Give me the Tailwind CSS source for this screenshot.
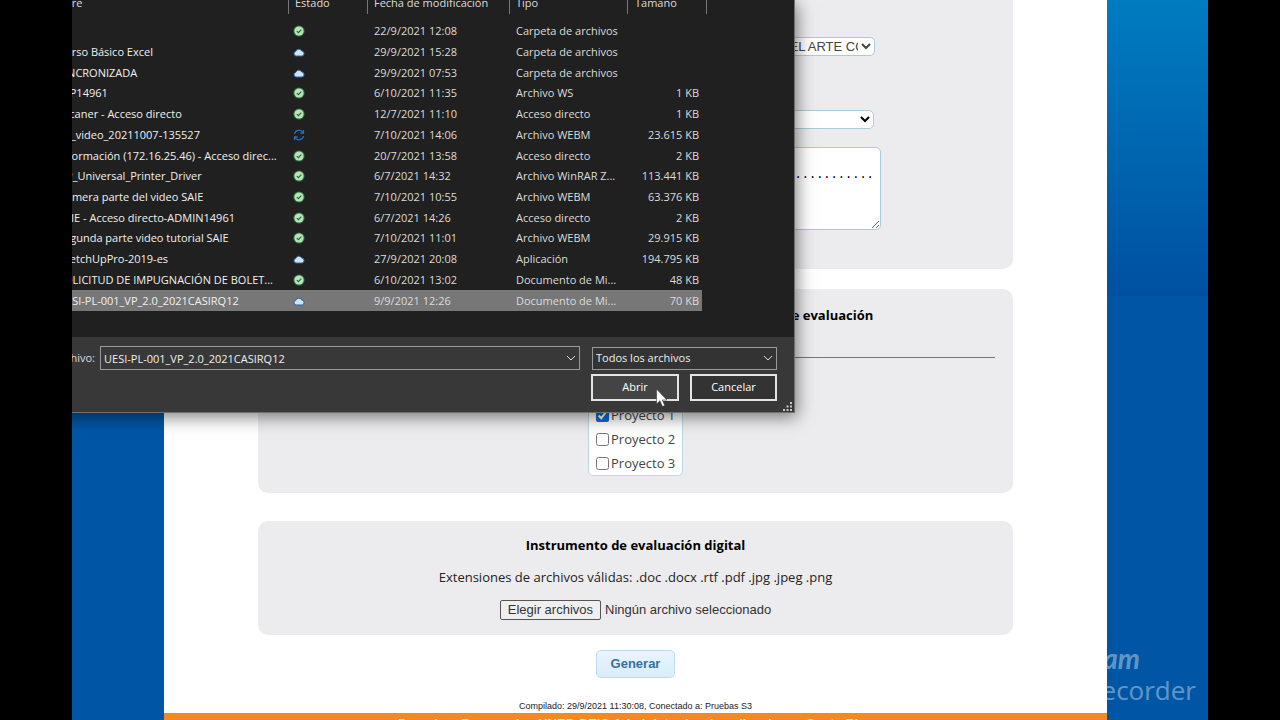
<!DOCTYPE html>
<html lang="es">
<head>
    <meta charset="UTF-8">
    <meta name="viewport" content="width=device-width, initial-scale=1.0">
    <title>Instrumento de evaluación</title>
    <script src="https://cdn.jsdelivr.net/npm/@tailwindcss/browser@4"></script>
</head>
<body class="bg-black px-[72px] font-['Open_Sans',sans-serif]">
    <!-- Icons used by the file list -->
    <svg class="hidden">
        <symbol id="ok" viewBox="0 0 12 12">
            <circle cx="6" cy="6" r="5.6" fill="#2f7a3c"></circle>
            <circle cx="6" cy="6" r="4.6" fill="#b9e2bc"></circle>
            <path d="M3.8 6.1l1.6 1.6 2.9-3.1" fill="none" stroke="#2b6b35" stroke-width="1.2"></path>
        </symbol>
        <symbol id="cloud" viewBox="0 0 12 12">
            <path d="M3 10a2.3 2.3 0 01-.3-4.5A3.2 3.2 0 018.6 4.9A2.6 2.6 0 019.2 10z" fill="#cfe4f7" stroke="#2468ac" stroke-width="1"></path>
        </symbol>
        <symbol id="sync" viewBox="0 0 12 12">
            <path d="M1.5 5A4.5 4.5 0 0110 3.8M10.5 1v3.2H7.3M10.5 7A4.5 4.5 0 012 8.2M1.5 11V7.8h3.2" fill="none" stroke="#2474bd" stroke-width="1.2"></path>
        </symbol>
    </svg>

    <div class="relative h-screen overflow-hidden bg-[#0056a4]">
        <div class="absolute inset-x-0 top-0 h-[296px] bg-linear-to-b from-[#007cc0] to-[#0050a0]"></div>

        <!-- Page -->
        <main class="relative ml-[92px] mr-[101px] flex h-full flex-col bg-white text-center">
            <section class="mx-[94px] flex h-[269px] shrink-0 flex-col items-center rounded-b-[10px] bg-[#ececee] pt-[37px]">
                <select aria-label="Asignatura" class="h-[19px] w-[478px] rounded-[5px] border border-[#a9cbdc] bg-white font-['Liberation_Sans',sans-serif] text-[13px] text-[#444]">
                    <option>412 - INTRODUCCIÓN A LA HISTORIA Y LA TEORÍA GENERAL DEL ARTE CONTEMPORÁNEO</option>
                </select>
                <select aria-label="Tipo de instrumento" class="mt-[54px] h-[19px] w-[476px] rounded-[5px] border border-[#a9cbdc] bg-white text-[13px]">
                    <option></option>
                </select>
                <textarea aria-label="Observaciones" class="mt-[18px] h-[83px] w-[490px] shrink-0 rounded-[5px] border border-[#a9cbdc] bg-white py-[6px] pr-0 pl-[7px] font-['Liberation_Mono',monospace] text-xs leading-[14px] text-black">

...................................................................</textarea>
            </section>

            <section class="mx-[94px] mt-5 flex h-[204px] shrink-0 flex-col items-center rounded-[10px] bg-[#ececee] pt-4">
                <h2 class="text-[13px] font-bold leading-5">Elijan los instrumentos que corresponden a esta propuesta de evaluación</h2>
                <hr class="mt-8 w-[719px] max-w-full border-[#777]">
                <div class="mt-auto mb-[17px] flex w-[95px] flex-col rounded-[5px] border border-[#b9d8e4] bg-white pt-1 pl-[7px] text-left text-[13px] leading-6 text-[#444]">
                    <label class="flex items-center gap-[2px]"><input type="checkbox" checked class="size-[13px] accent-[#0a6cdc]">Proyecto 1</label>
                    <label class="flex items-center gap-[2px]"><input type="checkbox" class="size-[13px]">Proyecto 2</label>
                    <label class="flex items-center gap-[2px]"><input type="checkbox" class="size-[13px]">Proyecto 3</label>
                </div>
            </section>

            <section class="mx-[94px] mt-7 flex h-[114px] shrink-0 flex-col items-center rounded-[10px] bg-[#ececee] pt-[14px]">
                <h2 class="text-[13px] font-bold leading-5">Instrumento de evaluación digital</h2>
                <p class="mt-3 text-[13px] leading-5 text-[#222]">Extensiones de archivos válidas: .doc .docx .rtf .pdf .jpg .jpeg .png</p>
                <div class="mt-[13px] flex items-center gap-1 font-['Liberation_Sans',sans-serif] text-[13px] text-[#333]">
                    <input id="files" type="file" multiple class="sr-only">
                    <label for="files" class="rounded-[2px] border border-[#555] bg-[#efefef] px-[7px] leading-[18px]">Elegir archivos</label>
                    <span>Ningún archivo seleccionado</span>
                </div>
            </section>

            <button class="mx-auto mt-[15px] h-7 w-[79px] shrink-0 rounded-[5px] border border-[#bcdbea] bg-linear-to-b from-[#e8f5fe] to-[#d8edfa] font-['Liberation_Sans',sans-serif] text-[13px] font-bold text-[#38709e]">Generar</button>
            <p class="mt-[21px] font-['Liberation_Sans',sans-serif] text-[9px] leading-[14px] text-[#222]">Compilado: 29/9/2021 11:30:08, Conectado a: Pruebas S3</p>
            <footer class="h-[7px] shrink-0 overflow-hidden bg-[#f28a24] pt-[3px] font-['Liberation_Sans',sans-serif] text-[13px] font-bold leading-4 text-[#fff3c0]">Derechos Reservados UNED-DTIC Administrador de aplicaciones Costa Rica</footer>
        </main>

        <!-- Recorder watermark -->
        <div class="absolute right-3 bottom-[14px] text-right text-white/40">
            <p class="pr-14 font-['Lato',sans-serif] text-[28px] font-bold italic leading-8">Icecream</p>
            <p class="text-[26px] leading-8">Screen Recorder</p>
        </div>

        <!-- Open file window -->
        <div class="absolute top-0 -left-8 w-[755px] overflow-hidden border-r border-b border-[#707070] bg-[#202020] text-[11px] text-[#dcdcdc] shadow-[2px_4px_16px_rgba(0,0,0,0.5)]">
            <table class="-mt-3 h-[323px] w-[662px] table-fixed text-left leading-4 whitespace-nowrap">
                <thead>
                    <tr class="h-[33px] align-top *:font-normal">
                        <th class="w-[249px] p-0"><div class="h-[26px] border-r border-[#777] pt-[7px]">Nombre</div></th>
                        <th class="w-[79px] p-0"><div class="h-[26px] border-r border-[#777] pt-[7px] pl-[6px]">Estado</div></th>
                        <th class="w-[142px] p-0"><div class="h-[26px] border-r border-[#777] pt-[7px] pl-[6px]">Fecha de modificación</div></th>
                        <th class="w-[118px] p-0"><div class="h-[26px] border-r border-[#777] pt-[7px] pl-[6px]">Tipo</div></th>
                        <th class="p-0"><div class="h-[26px] w-[79px] border-r border-[#777] pt-[7px] pl-[7px]">Tamaño</div></th>
                    </tr>
                </thead>
                <tbody class="[&_td]:p-0 [&_td:nth-child(1)]:pl-[18px] [&_td:nth-child(1)]:text-[#f0f0f0] [&_td:nth-child(2)]:pl-1 [&_td:nth-child(3)]:pl-[6px] [&_td:nth-child(4)]:pl-[6px] [&_td:nth-child(5)]:pr-[3px] [&_td:nth-child(5)]:text-right [&_svg]:size-3">
                    <tr><td></td><td><svg><use href="#ok"></use></svg></td><td>22/9/2021 12:08</td><td>Carpeta de archivos</td><td></td></tr>
                    <tr><td>Curso Básico Excel</td><td><svg><use href="#cloud"></use></svg></td><td>29/9/2021 15:28</td><td>Carpeta de archivos</td><td></td></tr>
                    <tr><td>SINCRONIZADA</td><td><svg><use href="#cloud"></use></svg></td><td>29/9/2021 07:53</td><td>Carpeta de archivos</td><td></td></tr>
                    <tr><td>FTP14961</td><td><svg><use href="#ok"></use></svg></td><td>6/10/2021 11:35</td><td>Archivo WS</td><td>1 KB</td></tr>
                    <tr><td>Escaner - Acceso directo</td><td><svg><use href="#ok"></use></svg></td><td>12/7/2021 11:10</td><td>Acceso directo</td><td>1 KB</td></tr>
                    <tr><td>de_video_20211007-135527</td><td><svg><use href="#sync"></use></svg></td><td>7/10/2021 14:06</td><td>Archivo WEBM</td><td>23.615 KB</td></tr>
                    <tr><td>Información (172.16.25.46) - Acceso direc...</td><td><svg><use href="#ok"></use></svg></td><td>20/7/2021 13:58</td><td>Acceso directo</td><td>2 KB</td></tr>
                    <tr><td>HP_Universal_Printer_Driver</td><td><svg><use href="#ok"></use></svg></td><td>6/7/2021 14:32</td><td>Archivo WinRAR Z...</td><td>113.441 KB</td></tr>
                    <tr><td>Primera parte del video SAIE</td><td><svg><use href="#ok"></use></svg></td><td>7/10/2021 10:55</td><td>Archivo WEBM</td><td>63.376 KB</td></tr>
                    <tr><td>SAIE - Acceso directo-ADMIN14961</td><td><svg><use href="#ok"></use></svg></td><td>6/7/2021 14:26</td><td>Acceso directo</td><td>2 KB</td></tr>
                    <tr><td>Segunda parte video tutorial SAIE</td><td><svg><use href="#ok"></use></svg></td><td>7/10/2021 11:01</td><td>Archivo WEBM</td><td>29.915 KB</td></tr>
                    <tr><td>SketchUpPro-2019-es</td><td><svg><use href="#cloud"></use></svg></td><td>27/9/2021 20:08</td><td>Aplicación</td><td>194.795 KB</td></tr>
                    <tr><td>SOLICITUD DE IMPUGNACIÓN DE BOLET...</td><td><svg><use href="#ok"></use></svg></td><td>6/10/2021 13:02</td><td>Documento de Mi...</td><td>48 KB</td></tr>
                    <tr class="bg-[#777]"><td>UESI-PL-001_VP_2.0_2021CASIRQ12</td><td><svg><use href="#cloud"></use></svg></td><td>9/9/2021 12:26</td><td>Documento de Mi...</td><td>70 KB</td></tr>
                </tbody>
            </table>

            <div class="relative mt-[26px] flex flex-col gap-1 bg-[#383838] pt-[9px] pr-[17px] pb-[11px]">
                <div class="flex items-center gap-3">
                    <div class="flex grow items-center justify-end gap-[5px]">
                        <label for="name">Archivo:</label>
                        <div class="relative flex w-[480px] items-center">
                            <input id="name" type="text" value="UESI-PL-001_VP_2.0_2021CASIRQ12" class="h-6 w-full border border-[#9a9a9a] bg-[#383838] px-[3px] text-[#f0f0f0]">
                            <svg class="absolute right-1 h-3 w-[10px]" viewBox="0 0 10 12" fill="none" stroke="#ddd"><path d="M1 4l4 4 4-4"></path></svg>
                        </div>
                    </div>
                    <div class="relative flex w-[185px] items-center">
                        <select aria-label="Tipo de archivo" class="h-[23px] w-full appearance-none border border-[#9a9a9a] bg-[#333] px-[3px] text-[#f0f0f0]">
                            <option>Todos los archivos</option>
                        </select>
                        <svg class="absolute right-1 h-3 w-[10px]" viewBox="0 0 10 12" fill="none" stroke="#ddd"><path d="M1 4l4 4 4-4"></path></svg>
                    </div>
                </div>
                <div class="flex justify-end gap-[11px]">
                    <button class="h-[27px] w-[88px] border-2 border-[#e4e4e4] bg-[#444] text-white">Abrir</button>
                    <button class="h-[27px] w-[87px] border-2 border-[#e4e4e4] bg-[#333] text-white">Cancelar</button>
                </div>
                <svg class="absolute right-[2px] bottom-[1px] size-[9px]" viewBox="0 0 9 9" fill="#c8c8c8"><path d="M7 0h2v2H7zM7 3.5h2v2H7zM7 7h2v2H7zM3.5 3.5h2v2h-2zM3.5 7h2v2h-2zM0 7h2v2H0z"></path></svg>
            </div>
        </div>

        <!-- Mouse pointer -->
        <svg class="absolute top-[388px] left-[584px] h-[19px] w-3" viewBox="0 0 12 19"><path d="M.5 1v15l3.4-3.2 2.5 5.7 2.4-1-2.5-5.5H11z" fill="#fff" stroke="#333" stroke-width=".6"></path></svg>
    </div>
</body>
</html>
